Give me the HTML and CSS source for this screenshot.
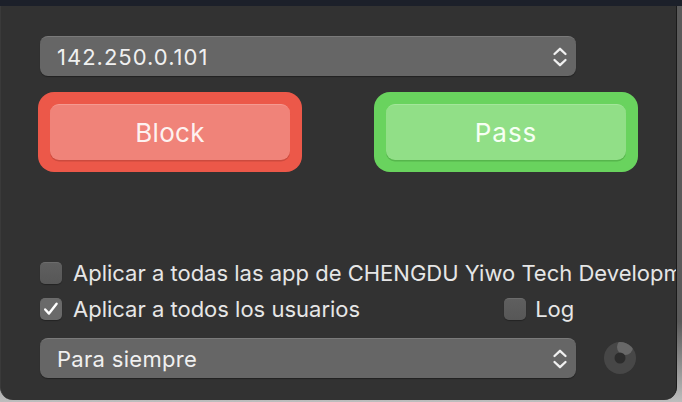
FILE: index.html
```html
<!DOCTYPE html>
<html>
<head>
<meta charset="utf-8">
<link rel="stylesheet" href="styles.css">
</head>
<body>
<div class="topbar"></div>
<div class="window">
  <div class="popup popup-top">
    <span class="popup-text popup-ip">142.250.0.101</span>
    <svg class="chev" width="16" height="22" viewBox="0 0 16 22"><path d="M2.5 8 L8 2.8 L13.5 8 M2.5 14 L8 19.2 L13.5 14" fill="none" stroke="#f0f0f0" stroke-width="2.3" stroke-linecap="round" stroke-linejoin="round"/></svg>
  </div>
  <div class="actions">
    <div class="ring ring-red"><div class="btn btn-red">Block</div></div>
    <div class="ring ring-green"><div class="btn btn-green">Pass</div></div>
  </div>
  <div class="checks">
    <div class="row">
      <label class="check"><span class="box"></span><span class="label">Aplicar a todas las app de CHENGDU Yiwo Tech Development Co., Ltd.</span></label>
    </div>
    <div class="row">
      <label class="check"><span class="box box-on"><svg width="22" height="22" viewBox="0 0 22 22"><path d="M5.2 11.5 L9 15.6 L16.6 5.8" fill="none" stroke="#fff" stroke-width="2.4" stroke-linecap="round" stroke-linejoin="round"/></svg></span><span class="label">Aplicar a todos los usuarios</span></label>
      <label class="check check-log"><span class="box"></span><span class="label">Log</span></label>
    </div>
  </div>
  <div class="bottom">
    <div class="popup">
      <span class="popup-text">Para siempre</span>
      <svg class="chev" width="16" height="22" viewBox="0 0 16 22"><path d="M2.5 8 L8 2.8 L13.5 8 M2.5 14 L8 19.2 L13.5 14" fill="none" stroke="#f0f0f0" stroke-width="2.3" stroke-linecap="round" stroke-linejoin="round"/></svg>
    </div>
    <svg class="spinner" width="34" height="34" viewBox="0 0 34 34">
      <defs><clipPath id="disk"><circle cx="17" cy="17" r="16"/></clipPath></defs>
      <circle cx="17" cy="17" r="16" fill="#474747"/>
      <circle cx="22" cy="6" r="8" fill="#686868" clip-path="url(#disk)"/>
      <circle cx="17" cy="17" r="5.5" fill="#2c2c2c"/>
    </svg>
  </div>
</div>
</body>
</html>
```
FILE: styles.css
```css
html, body {
  margin: 0;
  padding: 0;
}
body {
  width: 682px;
  height: 402px;
  overflow: hidden;
  background: linear-gradient(to bottom, #5a5a5a 0, #5a5a5a 80%, #bdbdbd 100%);
  font-family: Inter, "Noto Sans", "Liberation Sans", sans-serif;
  color: #e8e8e8;
}
.topbar {
  height: 6px;
  background: #1c202a;
}
.window {
  box-sizing: border-box;
  width: 677px;
  height: 394px;
  background: #323232;
  border-right: 1px solid #1b1b1b;
  border-left: 1px solid #3a3a3a;
  border-radius: 0 0 13px 13px;
  padding: 30px 0 0 39px;
  overflow: hidden;
}
.popup {
  box-sizing: border-box;
  width: 536px;
  height: 40px;
  border-radius: 8px;
  background: #666666;
  border-top: 1px solid #7a7a7a;
  box-shadow: 0 1px 1px rgba(0,0,0,0.35);
  display: flex;
  align-items: center;
  justify-content: space-between;
  padding: 0 8px 0 17px;
}
.popup-text {
  font-size: 22px;
  color: #f0f0f0;
  letter-spacing: 0.3px;
}
.popup-ip {
  letter-spacing: 1px;
}
.chev {
  display: block;
}
.actions {
  display: flex;
  gap: 72px;
  margin: 16px 0 0 -2px;
}
.ring {
  box-sizing: border-box;
  width: 264px;
  height: 80px;
  padding: 12px;
  border-radius: 16px;
}
.ring-red { background: #ec5849; }
.ring-green { background: #69d35e; }
.btn {
  box-sizing: border-box;
  height: 56px;
  border-radius: 9px;
  display: flex;
  align-items: center;
  justify-content: center;
  font-size: 26px;
  letter-spacing: 0.3px;
  color: #fdf2f0;
}
.btn-red {
  background: #f08379;
  border-top: 1px solid #f59a91;
  box-shadow: 0 1.5px 0 #cc4a3e;
}
.btn-green {
  background: #91df87;
  border-top: 1px solid #a3e69a;
  box-shadow: 0 1.5px 0 #56b64c;
  color: #f6fff4;
  letter-spacing: 1px;
}
.checks {
  margin-top: 90px;
  display: flex;
  flex-direction: column;
}
.row {
  height: 36px;
  display: flex;
  align-items: flex-start;
}
.check {
  display: flex;
  align-items: center;
  gap: 11px;
  white-space: nowrap;
  height: 22px;
}
.check-log {
  margin-left: 144px;
  gap: 9px;
}
.box {
  box-sizing: border-box;
  width: 22px;
  height: 22px;
  border-radius: 5px;
  background: linear-gradient(to bottom, #5f5f5f, #575757);
  border-top: 1px solid #6c6c6c;
  box-shadow: 0 1px 1px rgba(0,0,0,0.3);
  flex: none;
  display: flex;
  align-items: center;
  justify-content: center;
}
.box-on {
  background: #6a6a6a;
}
.box-on svg {
  display: block;
  margin-top: -1px;
}
.label {
  font-size: 22px;
  color: #e6e6e6;
}
.bottom {
  margin-top: 4px;
  display: flex;
  align-items: center;
  gap: 27px;
}
.spinner {
  display: block;
}
```
